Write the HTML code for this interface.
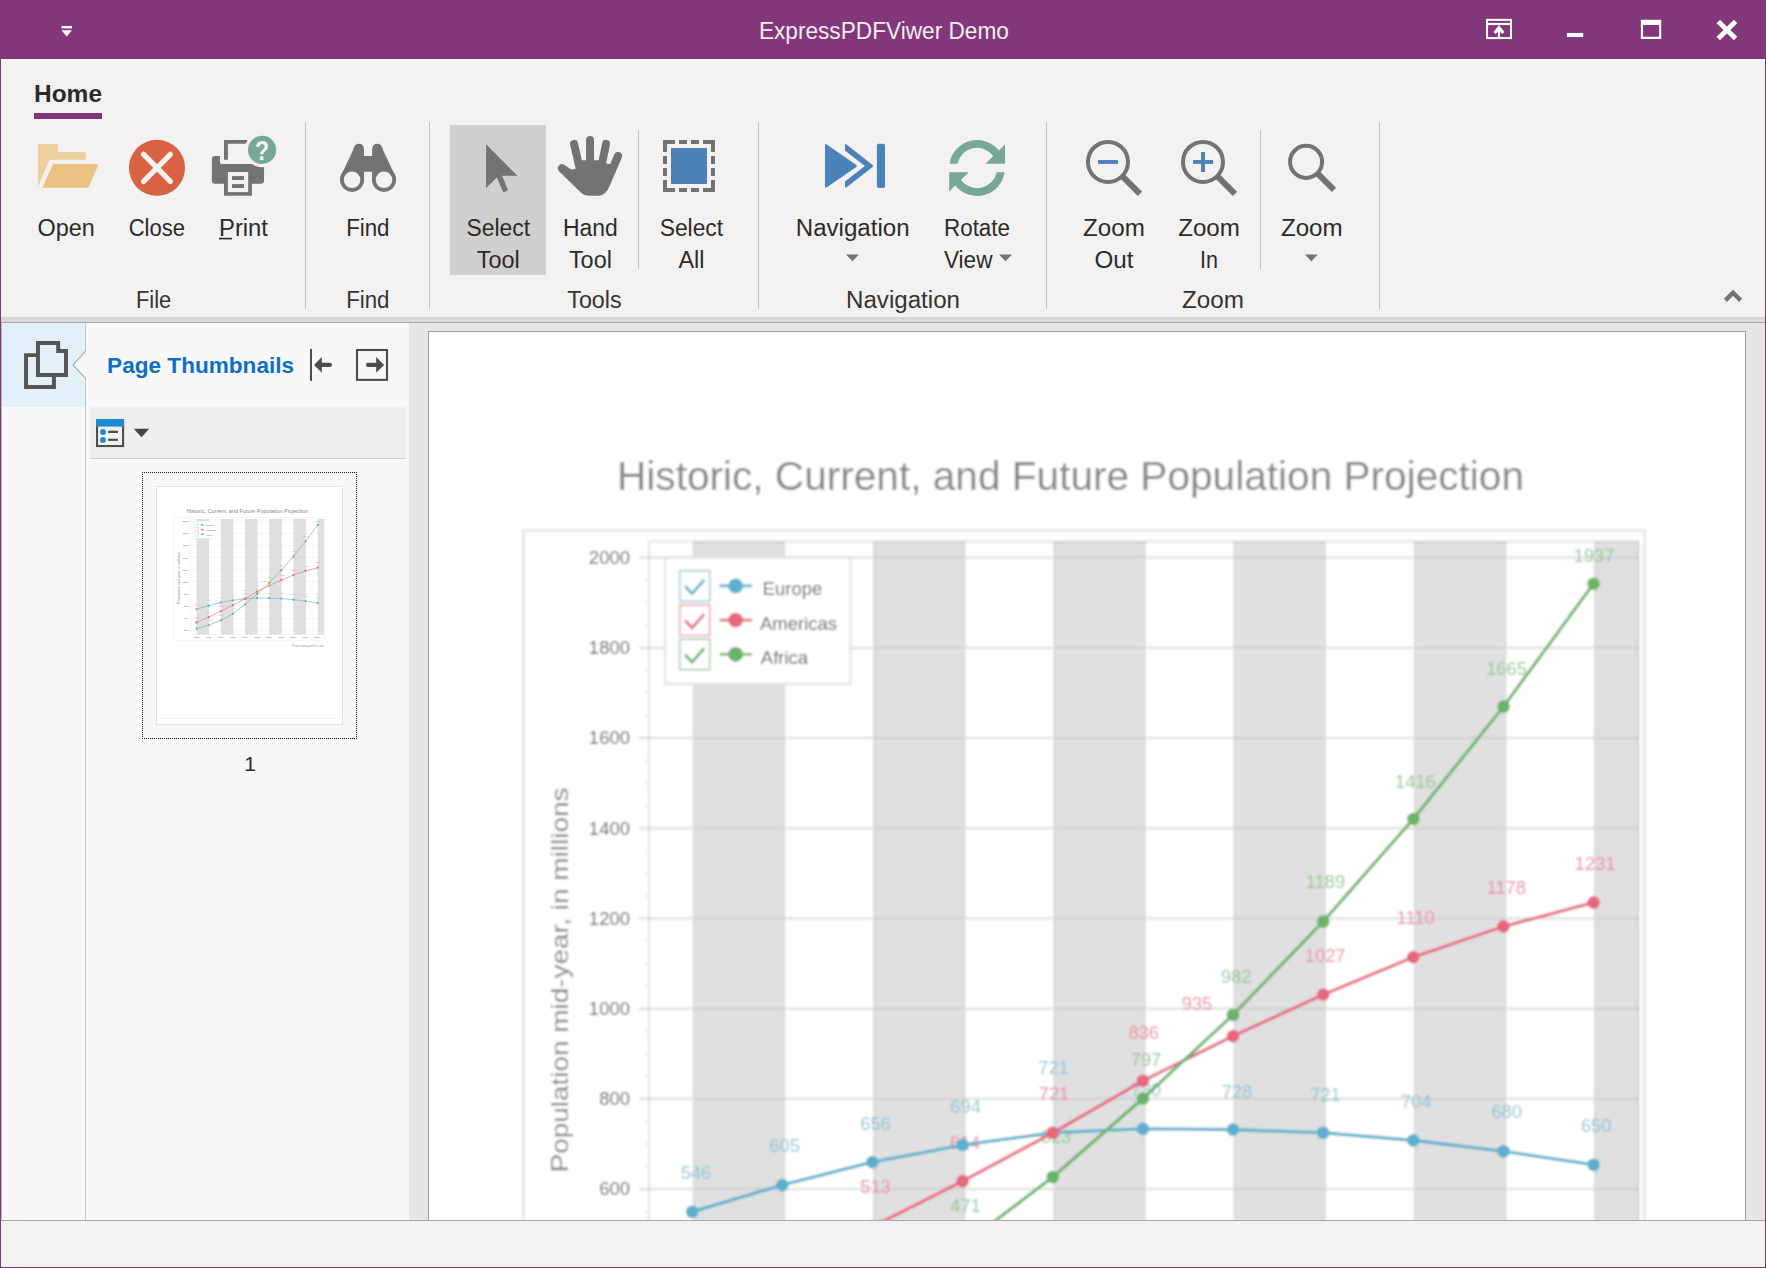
<!DOCTYPE html>
<html lang="en"><head><meta charset="utf-8"><title>ExpressPDFViwer Demo</title>
<style>
*{margin:0;padding:0;box-sizing:border-box}
html,body{width:1766px;height:1268px;overflow:hidden;background:#F3F2F1;font-family:"Liberation Sans", sans-serif}
#win{position:absolute;left:0;top:0;width:1766px;height:1268px;background:#F3F2F1;overflow:hidden}
#titlebar{position:absolute;left:0;top:0;width:1766px;height:59px;background:#82377A}
#bl,#br,#bb{position:absolute;background:#82377A}
#bl{left:0;top:59px;width:1px;height:1209px}
#br{left:1765px;top:59px;width:1px;height:1209px}
#bb{left:0;top:1267px;width:1766px;height:1px}
#ribbon{position:absolute;left:1px;top:59px;width:1764px;height:258px;background:#F3F2F1}
#ribshadow{position:absolute;left:1px;top:317px;width:1764px;height:5px;background:linear-gradient(#D3D3D3,#DEDEDE)}
#ribline{position:absolute;left:1px;top:322px;width:1764px;height:1px;background:#A9A9A9}
#selbtn{position:absolute;left:449px;top:66px;width:96px;height:150px;background:#D0CFCD}
#body{position:absolute;left:1px;top:323px;width:1764px;height:897px;background:#E6E6E6}
#tabs{position:absolute;left:1px;top:0;width:83px;height:897px;background:#F8F8F8}
#tabsel{position:absolute;left:0;top:0;width:83px;height:84px;background:#E5F1FA}
#tabsep{position:absolute;left:84px;top:0;width:1px;height:897px;background:#C6C6C6}
#lborder{position:absolute;left:0;top:0;width:1px;height:897px;background:#B8B8B8}
#pane{position:absolute;left:85px;top:0;width:323px;height:897px;background:#F8F8F8}
#panebar{position:absolute;left:4px;top:84px;width:316px;height:52px;background:#EFEFEF;border-bottom:1px solid #D2D2D2}
#thumbsel{position:absolute;left:56px;top:149px;width:215px;height:267px;border:1px dotted #111}
#thumbpage{position:absolute;left:70px;top:163px;width:187px;height:239px;background:#fff;border:1px solid #E2E2E2;overflow:hidden}
#viewer{position:absolute;left:427px;top:8px;width:1318px;height:889px;background:#fff;border:1px solid #A0A0A0;border-bottom:none;overflow:hidden}
#bodyline{position:absolute;left:1px;top:1220px;width:1764px;height:1px;background:#A9A9A9}
#status{position:absolute;left:1px;top:1221px;width:1764px;height:46px;background:#F3F2F1}
svg{position:absolute;left:0;top:0;overflow:visible}
svg text{font-family:"Liberation Sans", sans-serif}
</style></head><body><div id="win">
<div id="titlebar">
<svg width="1766" height="59" viewBox="0 0 1766 59">
<rect x="61.5" y="26" width="10.5" height="2.4" fill="#FFFFFF"/>
<path d="M61.5 30.2 H72 L66.75 36.4 Z" fill="#FFFFFF"/>
<rect x="1487.05" y="19.83" width="23.95" height="18.25" fill="none" stroke="#FFFFFF" stroke-width="2"/>
<rect x="1486.05" y="22.9" width="25.95" height="2.2" fill="#FFFFFF"/>
<rect x="1497.9" y="27.4" width="2.2" height="10" fill="#FFFFFF"/>
<path d="M1494.6 33 L1499 27.6 L1503.4 33" fill="none" stroke="#FFFFFF" stroke-width="3"/>
<rect x="1566.9" y="32.96" width="16.3" height="4.08" fill="#FFFFFF"/>
<path d="M1640.87 19.85 H1661.25 V39.08 H1640.87 Z M1643.04 25.08 V36.83 H1659.08 V25.08 Z" fill="#FFFFFF" fill-rule="evenodd"/>
<path d="M1718.3 21.55 L1735.6 38.5 M1735.6 21.55 L1718.3 38.5" stroke="#FFFFFF" stroke-width="4.8" fill="none"/>
<text x="883.9" y="39.4" font-size="23.3" text-anchor="middle" fill="#F4EEF3" font-weight="normal" textLength="250" lengthAdjust="spacingAndGlyphs">ExpressPDFViwer Demo</text>
</svg></div>
<div id="ribbon"><div id="selbtn"></div>
<svg width="1764" height="258" viewBox="1 59 1764 258">
<text x="34" y="102" font-size="24" font-weight="bold" fill="#2B2B2B" textLength="68" lengthAdjust="spacingAndGlyphs">Home</text>
<rect x="34" y="113" width="68" height="6" fill="#82377A"/>
<rect x="305.0" y="122" width="1" height="187" fill="#C4C2C0"/>
<rect x="429.0" y="122" width="1" height="187" fill="#C4C2C0"/>
<rect x="758.0" y="122" width="1" height="187" fill="#C4C2C0"/>
<rect x="1046.0" y="122" width="1" height="187" fill="#C4C2C0"/>
<rect x="1379.0" y="122" width="1" height="187" fill="#C4C2C0"/>
<rect x="638.0" y="130" width="1" height="139" fill="#C4C2C0"/>
<rect x="1260.0" y="130" width="1" height="139" fill="#C4C2C0"/>
<path d="M39.5 144.04 H56.4 Q57.9 144.04 57.9 145.5 V151.92 H84.5 Q85.98 151.92 85.98 153.4 V159.7 H52 Q49.7 159.7 48.8 161.6 L37.97 186.4 V145.5 Q37.97 144.04 39.5 144.04 Z" fill="#ECCF9E"/>
<path d="M53.1 163.97 H97 Q98.7 163.97 98 165.6 L88.9 186.5 Q88.3 187.8 86.8 187.8 H42.2 Z" fill="#EBC282"/>
<circle cx="156.99" cy="167.86" r="28.08" fill="#D96244"/>
<path d="M143.6 154.4 L170.4 181.4 M170.4 154.4 L143.6 181.4" stroke="#F3F2F1" stroke-width="5.3" stroke-linecap="round"/>
<path d="M225.95 159.8 V141.85 H247" fill="none" stroke="#737373" stroke-width="3.9"/>
<path d="M211.9 159.3 Q211.9 155.95 215.2 155.95 H219.9 V161.4 Q219.9 163.96 222.5 163.96 H264.05 V180.5 Q264.05 183.8 260.75 183.8 H215.2 Q211.9 183.8 211.9 180.5 Z" fill="#737373"/>
<rect x="224" y="171.1" width="27.9" height="24.6" fill="#737373"/>
<rect x="227.9" y="172" width="20.3" height="20.1" fill="#F3F2F1"/>
<rect x="232" y="176.1" width="12" height="3.9" fill="#737373"/>
<rect x="232" y="184.1" width="12" height="3.9" fill="#737373"/>
<circle cx="262.1" cy="149.9" r="17.4" fill="#F3F2F1"/>
<circle cx="262.1" cy="149.9" r="14.1" fill="#76A797"/>
<text transform="translate(262.05 160.1) scale(0.86 1.04)" x="0" y="0" font-size="27" font-weight="bold" text-anchor="middle" fill="#F4F4F2">?</text>
<path d="M340.6 176.4 L352.9 150.6 Q354.2 143.8 358.4 143.8 Q363.97 143.8 363.97 149.5 V156.05 H372.13 V149.5 Q372.13 143.8 377.7 143.8 Q381.9 143.8 383.2 150.6 L395.5 176.4 V181 H372.13 V171.68 H363.97 V181 H340.6 Z" fill="#737373"/>
<circle cx="352.08" cy="179.83" r="12.05" fill="#737373"/><circle cx="384.02" cy="179.83" r="12.05" fill="#737373"/>
<circle cx="352.08" cy="179.83" r="8.27" fill="#F3F2F1"/><circle cx="384.02" cy="179.83" r="8.27" fill="#F3F2F1"/>
<path d="M486.06 144.16 L517.43 175.64 L502.1 175.64 L507.7 189.2 Q508.1 190.3 507 190.8 L504.4 191.9 Q503.2 192.3 502.7 191.2 L496.9 177.5 L486.06 187.98 Z" fill="#737373"/>
<g stroke="#737373" stroke-linecap="round" fill="none" stroke-width="7.95"><path d="M574.02 143.8 L578.9 165"/><path d="M590.03 139.94 V165"/><path d="M606.05 143.8 L602 164"/><path d="M618.03 155.84 L611.6 171"/><path d="M561.87 168.1 L576 177.6"/></g>
<path d="M575.1 168.9 L581.4 160.3 H598.9 L606.05 163.6 L610.9 164.2 L621.7 157.3 L610.2 184.7 Q605.8 195.7 598.6 195.7 H589.2 Q583.6 195.7 579.8 191.5 L559 171.3 Z" fill="#737373"/>
<rect x="671" y="148" width="36" height="36" fill="#4D82B8"/>
<path d="M663 140 h12 v4 h-8 v8 h-4 Z M715 140 h-12 v4 h8 v8 h4 Z M715 192 h-12 v-4 h8 v-8 h4 Z M663 192 h12 v-4 h-8 v-8 h-4 Z" fill="#737373"/>
<rect x="679" y="140" width="8" height="4" fill="#737373"/>
<rect x="679" y="188" width="8" height="4" fill="#737373"/>
<rect x="663" y="156" width="4" height="8" fill="#737373"/>
<rect x="711" y="156" width="4" height="8" fill="#737373"/>
<rect x="691" y="140" width="8" height="4" fill="#737373"/>
<rect x="691" y="188" width="8" height="4" fill="#737373"/>
<rect x="663" y="168" width="4" height="8" fill="#737373"/>
<rect x="711" y="168" width="4" height="8" fill="#737373"/>
<path d="M845 145.3 Q845 143.3 846.6 144.5 L872.6 165 Q873.7 166 872.6 167 L846.6 187.3 Q845 188.5 845 186.5 V181.5 L864.8 166 L845 150.6 Z" fill="#4C82BB"/>
<path d="M824.97 145.4 Q824.97 143.2 826.8 144.5 L856.3 165.1 Q857.4 166 856.3 166.9 L826.8 187.3 Q824.97 188.6 824.97 186.4 Z" fill="#4C82BB"/>
<rect x="876.9" y="143.8" width="8.1" height="44.2" rx="1.8" fill="#4C82BB"/>
<path d="M949.53 163.75 A27.9 27.9 0 0 1 998.86 150.53 L1005 144.5 V163.75 H985.4 L993.26 156.04 A20.1 20.1 0 0 0 957.45 163.75 Z" fill="#76A797"/>
<path d="M949.53 163.75 A27.9 27.9 0 0 1 998.86 150.53 L1005 144.5 V163.75 H985.4 L993.26 156.04 A20.1 20.1 0 0 0 957.45 163.75 Z" fill="#76A797" transform="rotate(180 977.1 168)"/>
<circle cx="1107.97" cy="161.93" r="20.03" fill="none" stroke="#737373" stroke-width="4.0"/><path d="M1122.49 176.45 L1139.96 193.87" stroke="#737373" stroke-width="6.1" stroke-linecap="butt"/>
<rect x="1098.06" y="160.04" width="20" height="3.86" fill="#4C82BB"/>
<circle cx="1202.97" cy="161.93" r="20.03" fill="none" stroke="#737373" stroke-width="4.0"/><path d="M1217.49 176.45 L1234.96 193.87" stroke="#737373" stroke-width="6.1" stroke-linecap="butt"/>
<rect x="1193.06" y="160.04" width="20" height="3.86" fill="#4C82BB"/>
<rect x="1201.05" y="152" width="3.95" height="20" fill="#4C82BB"/>
<circle cx="1306.07" cy="161.85" r="16.03" fill="none" stroke="#737373" stroke-width="4"/><path d="M1317.76 173.54 L1333.96 189.88" stroke="#737373" stroke-width="6.1" stroke-linecap="butt"/>
<path d="M846 254.4 H859 L852.5 261.2 Z" fill="#737373"/>
<path d="M999 254.4 H1012 L1005.5 261.2 Z" fill="#737373"/>
<path d="M1304.8 254.4 H1317.8 L1311.3 261.2 Z" fill="#737373"/>
<path d="M1725.4 300.4 L1733 292.8 L1740.6 300.4" fill="none" stroke="#737373" stroke-width="4.4"/>
<text x="66.1" y="235.8" font-size="23.5" text-anchor="middle" fill="#2B2B2B" font-weight="normal" textLength="57.2" lengthAdjust="spacingAndGlyphs">Open</text>
<text x="156.9" y="235.8" font-size="23.5" text-anchor="middle" fill="#2B2B2B" font-weight="normal" textLength="56.4" lengthAdjust="spacingAndGlyphs">Close</text>
<text x="367.8" y="235.8" font-size="23.5" text-anchor="middle" fill="#2B2B2B" font-weight="normal" textLength="43.3" lengthAdjust="spacingAndGlyphs">Find</text>
<text x="498.3" y="235.8" font-size="23.5" text-anchor="middle" fill="#2B2B2B" font-weight="normal" textLength="63.4" lengthAdjust="spacingAndGlyphs">Select</text>
<text x="498.3" y="267.9" font-size="23.5" text-anchor="middle" fill="#2B2B2B" font-weight="normal" textLength="43" lengthAdjust="spacingAndGlyphs">Tool</text>
<text x="590.4" y="235.8" font-size="23.5" text-anchor="middle" fill="#2B2B2B" font-weight="normal" textLength="54.8" lengthAdjust="spacingAndGlyphs">Hand</text>
<text x="590.4" y="267.9" font-size="23.5" text-anchor="middle" fill="#2B2B2B" font-weight="normal" textLength="43" lengthAdjust="spacingAndGlyphs">Tool</text>
<text x="691.4" y="235.8" font-size="23.5" text-anchor="middle" fill="#2B2B2B" font-weight="normal" textLength="63.4" lengthAdjust="spacingAndGlyphs">Select</text>
<text x="691.4" y="267.9" font-size="23.5" text-anchor="middle" fill="#2B2B2B" font-weight="normal" textLength="26" lengthAdjust="spacingAndGlyphs">All</text>
<text x="852.7" y="235.8" font-size="23.5" text-anchor="middle" fill="#2B2B2B" font-weight="normal" textLength="113.8" lengthAdjust="spacingAndGlyphs">Navigation</text>
<text x="977" y="235.8" font-size="23.5" text-anchor="middle" fill="#2B2B2B" font-weight="normal" textLength="66" lengthAdjust="spacingAndGlyphs">Rotate</text>
<text x="1113.9" y="235.8" font-size="23.5" text-anchor="middle" fill="#2B2B2B" font-weight="normal" textLength="61.7" lengthAdjust="spacingAndGlyphs">Zoom</text>
<text x="1113.9" y="267.9" font-size="23.5" text-anchor="middle" fill="#2B2B2B" font-weight="normal" textLength="39" lengthAdjust="spacingAndGlyphs">Out</text>
<text x="1209" y="235.8" font-size="23.5" text-anchor="middle" fill="#2B2B2B" font-weight="normal" textLength="61.7" lengthAdjust="spacingAndGlyphs">Zoom</text>
<text x="1209" y="267.9" font-size="23.5" text-anchor="middle" fill="#2B2B2B" font-weight="normal" textLength="17.9" lengthAdjust="spacingAndGlyphs">In</text>
<text x="1311.8" y="235.8" font-size="23.5" text-anchor="middle" fill="#2B2B2B" font-weight="normal" textLength="61.7" lengthAdjust="spacingAndGlyphs">Zoom</text>
<text x="243.5" y="235.8" font-size="23.5" text-anchor="middle" fill="#2B2B2B" textLength="49" lengthAdjust="spacingAndGlyphs">Print</text>
<rect x="219" y="237.8" width="13" height="1.6" fill="#2B2B2B"/>
<text x="968.2" y="267.9" font-size="23.5" text-anchor="middle" fill="#2B2B2B" font-weight="normal" textLength="48.5" lengthAdjust="spacingAndGlyphs">View</text>
<text x="153.6" y="307.8" font-size="23.5" text-anchor="middle" fill="#333333" font-weight="normal" textLength="35.2" lengthAdjust="spacingAndGlyphs">File</text>
<text x="367.8" y="307.8" font-size="23.5" text-anchor="middle" fill="#333333" font-weight="normal" textLength="43.3" lengthAdjust="spacingAndGlyphs">Find</text>
<text x="594.4" y="307.8" font-size="23.5" text-anchor="middle" fill="#333333" font-weight="normal" textLength="54.3" lengthAdjust="spacingAndGlyphs">Tools</text>
<text x="903" y="307.8" font-size="23.5" text-anchor="middle" fill="#333333" font-weight="normal" textLength="114" lengthAdjust="spacingAndGlyphs">Navigation</text>
<text x="1212.9" y="307.8" font-size="23.5" text-anchor="middle" fill="#333333" font-weight="normal" textLength="62" lengthAdjust="spacingAndGlyphs">Zoom</text>
</svg></div>
<div id="ribshadow"></div><div id="ribline"></div>
<div id="body"><div id="tabs"><div id="tabsel"></div></div><div id="lborder"></div><div id="tabsep"></div>
<div id="pane"><div id="panebar"></div><div id="thumbsel"></div><div id="thumbpage">
<svg width="185" height="237" viewBox="157 487 185 237">
<g transform="translate(103.42 446.26) scale(0.1345)">
<text x="1070.5" y="495.5" font-size="39.8" text-anchor="middle" fill="#858585" textLength="907" lengthAdjust="spacingAndGlyphs">Historic, Current, and Future Population Projection</text>
<rect x="523.5" y="530.5" width="1121" height="913" fill="#fff" stroke="#E2E2E2" stroke-width="2.2"/>
<rect x="649" y="541.5" width="989.5" height="857.5" fill="#fff"/>
<rect x="694" y="541.5" width="90.4" height="857.5" fill="#E0E0E0"/>
<rect x="874" y="541.5" width="90.4" height="857.5" fill="#E0E0E0"/>
<rect x="1054" y="541.5" width="90.4" height="857.5" fill="#E0E0E0"/>
<rect x="1234" y="541.5" width="90.4" height="857.5" fill="#E0E0E0"/>
<rect x="1414" y="541.5" width="90.4" height="857.5" fill="#E0E0E0"/>
<rect x="1594" y="541.5" width="44.5" height="857.5" fill="#E0E0E0"/>
<rect x="639" y="556.4" width="999.5" height="2.4" fill="#E1E1E1"/>
<rect x="694" y="556.4" width="90.4" height="2.4" fill="#D3D3D3"/>
<rect x="874" y="556.4" width="90.4" height="2.4" fill="#D3D3D3"/>
<rect x="1054" y="556.4" width="90.4" height="2.4" fill="#D3D3D3"/>
<rect x="1234" y="556.4" width="90.4" height="2.4" fill="#D3D3D3"/>
<rect x="1414" y="556.4" width="90.4" height="2.4" fill="#D3D3D3"/>
<rect x="1594" y="556.4" width="44.5" height="2.4" fill="#D3D3D3"/>
<rect x="639" y="646.6" width="999.5" height="2.4" fill="#E1E1E1"/>
<rect x="694" y="646.6" width="90.4" height="2.4" fill="#D3D3D3"/>
<rect x="874" y="646.6" width="90.4" height="2.4" fill="#D3D3D3"/>
<rect x="1054" y="646.6" width="90.4" height="2.4" fill="#D3D3D3"/>
<rect x="1234" y="646.6" width="90.4" height="2.4" fill="#D3D3D3"/>
<rect x="1414" y="646.6" width="90.4" height="2.4" fill="#D3D3D3"/>
<rect x="1594" y="646.6" width="44.5" height="2.4" fill="#D3D3D3"/>
<rect x="639" y="736.8" width="999.5" height="2.4" fill="#E1E1E1"/>
<rect x="694" y="736.8" width="90.4" height="2.4" fill="#D3D3D3"/>
<rect x="874" y="736.8" width="90.4" height="2.4" fill="#D3D3D3"/>
<rect x="1054" y="736.8" width="90.4" height="2.4" fill="#D3D3D3"/>
<rect x="1234" y="736.8" width="90.4" height="2.4" fill="#D3D3D3"/>
<rect x="1414" y="736.8" width="90.4" height="2.4" fill="#D3D3D3"/>
<rect x="1594" y="736.8" width="44.5" height="2.4" fill="#D3D3D3"/>
<rect x="639" y="827.0" width="999.5" height="2.4" fill="#E1E1E1"/>
<rect x="694" y="827.0" width="90.4" height="2.4" fill="#D3D3D3"/>
<rect x="874" y="827.0" width="90.4" height="2.4" fill="#D3D3D3"/>
<rect x="1054" y="827.0" width="90.4" height="2.4" fill="#D3D3D3"/>
<rect x="1234" y="827.0" width="90.4" height="2.4" fill="#D3D3D3"/>
<rect x="1414" y="827.0" width="90.4" height="2.4" fill="#D3D3D3"/>
<rect x="1594" y="827.0" width="44.5" height="2.4" fill="#D3D3D3"/>
<rect x="639" y="917.2" width="999.5" height="2.4" fill="#E1E1E1"/>
<rect x="694" y="917.2" width="90.4" height="2.4" fill="#D3D3D3"/>
<rect x="874" y="917.2" width="90.4" height="2.4" fill="#D3D3D3"/>
<rect x="1054" y="917.2" width="90.4" height="2.4" fill="#D3D3D3"/>
<rect x="1234" y="917.2" width="90.4" height="2.4" fill="#D3D3D3"/>
<rect x="1414" y="917.2" width="90.4" height="2.4" fill="#D3D3D3"/>
<rect x="1594" y="917.2" width="44.5" height="2.4" fill="#D3D3D3"/>
<rect x="639" y="1007.4" width="999.5" height="2.4" fill="#E1E1E1"/>
<rect x="694" y="1007.4" width="90.4" height="2.4" fill="#D3D3D3"/>
<rect x="874" y="1007.4" width="90.4" height="2.4" fill="#D3D3D3"/>
<rect x="1054" y="1007.4" width="90.4" height="2.4" fill="#D3D3D3"/>
<rect x="1234" y="1007.4" width="90.4" height="2.4" fill="#D3D3D3"/>
<rect x="1414" y="1007.4" width="90.4" height="2.4" fill="#D3D3D3"/>
<rect x="1594" y="1007.4" width="44.5" height="2.4" fill="#D3D3D3"/>
<rect x="639" y="1097.6" width="999.5" height="2.4" fill="#E1E1E1"/>
<rect x="694" y="1097.6" width="90.4" height="2.4" fill="#D3D3D3"/>
<rect x="874" y="1097.6" width="90.4" height="2.4" fill="#D3D3D3"/>
<rect x="1054" y="1097.6" width="90.4" height="2.4" fill="#D3D3D3"/>
<rect x="1234" y="1097.6" width="90.4" height="2.4" fill="#D3D3D3"/>
<rect x="1414" y="1097.6" width="90.4" height="2.4" fill="#D3D3D3"/>
<rect x="1594" y="1097.6" width="44.5" height="2.4" fill="#D3D3D3"/>
<rect x="639" y="1187.8" width="999.5" height="2.4" fill="#E1E1E1"/>
<rect x="694" y="1187.8" width="90.4" height="2.4" fill="#D3D3D3"/>
<rect x="874" y="1187.8" width="90.4" height="2.4" fill="#D3D3D3"/>
<rect x="1054" y="1187.8" width="90.4" height="2.4" fill="#D3D3D3"/>
<rect x="1234" y="1187.8" width="90.4" height="2.4" fill="#D3D3D3"/>
<rect x="1414" y="1187.8" width="90.4" height="2.4" fill="#D3D3D3"/>
<rect x="1594" y="1187.8" width="44.5" height="2.4" fill="#D3D3D3"/>
<rect x="639" y="1278.0" width="999.5" height="2.4" fill="#E1E1E1"/>
<rect x="694" y="1278.0" width="90.4" height="2.4" fill="#D3D3D3"/>
<rect x="874" y="1278.0" width="90.4" height="2.4" fill="#D3D3D3"/>
<rect x="1054" y="1278.0" width="90.4" height="2.4" fill="#D3D3D3"/>
<rect x="1234" y="1278.0" width="90.4" height="2.4" fill="#D3D3D3"/>
<rect x="1414" y="1278.0" width="90.4" height="2.4" fill="#D3D3D3"/>
<rect x="1594" y="1278.0" width="44.5" height="2.4" fill="#D3D3D3"/>
<rect x="639" y="1368.2" width="999.5" height="2.4" fill="#E1E1E1"/>
<rect x="694" y="1368.2" width="90.4" height="2.4" fill="#D3D3D3"/>
<rect x="874" y="1368.2" width="90.4" height="2.4" fill="#D3D3D3"/>
<rect x="1054" y="1368.2" width="90.4" height="2.4" fill="#D3D3D3"/>
<rect x="1234" y="1368.2" width="90.4" height="2.4" fill="#D3D3D3"/>
<rect x="1414" y="1368.2" width="90.4" height="2.4" fill="#D3D3D3"/>
<rect x="1594" y="1368.2" width="44.5" height="2.4" fill="#D3D3D3"/>
<rect x="692.8" y="541.5" width="2.2" height="857.5" fill="#DADADA"/>
<rect x="782.9" y="541.5" width="2.2" height="857.5" fill="#DADADA"/>
<rect x="873.1" y="541.5" width="2.2" height="857.5" fill="#DADADA"/>
<rect x="963.2" y="541.5" width="2.2" height="857.5" fill="#DADADA"/>
<rect x="1053.4" y="541.5" width="2.2" height="857.5" fill="#DADADA"/>
<rect x="1143.5" y="541.5" width="2.2" height="857.5" fill="#DADADA"/>
<rect x="1233.6" y="541.5" width="2.2" height="857.5" fill="#DADADA"/>
<rect x="1323.8" y="541.5" width="2.2" height="857.5" fill="#DADADA"/>
<rect x="1413.9" y="541.5" width="2.2" height="857.5" fill="#DADADA"/>
<rect x="1504.1" y="541.5" width="2.2" height="857.5" fill="#DADADA"/>
<rect x="1594.2" y="541.5" width="2.2" height="857.5" fill="#DADADA"/>
<rect x="644.5" y="579.4" width="4" height="1.6" fill="#ECECEC"/>
<rect x="644.5" y="601.9" width="4" height="1.6" fill="#ECECEC"/>
<rect x="644.5" y="624.5" width="4" height="1.6" fill="#ECECEC"/>
<rect x="644.5" y="669.6" width="4" height="1.6" fill="#ECECEC"/>
<rect x="644.5" y="692.1" width="4" height="1.6" fill="#ECECEC"/>
<rect x="644.5" y="714.7" width="4" height="1.6" fill="#ECECEC"/>
<rect x="644.5" y="759.8" width="4" height="1.6" fill="#ECECEC"/>
<rect x="644.5" y="782.3" width="4" height="1.6" fill="#ECECEC"/>
<rect x="644.5" y="804.9" width="4" height="1.6" fill="#ECECEC"/>
<rect x="644.5" y="850.0" width="4" height="1.6" fill="#ECECEC"/>
<rect x="644.5" y="872.5" width="4" height="1.6" fill="#ECECEC"/>
<rect x="644.5" y="895.1" width="4" height="1.6" fill="#ECECEC"/>
<rect x="644.5" y="940.2" width="4" height="1.6" fill="#ECECEC"/>
<rect x="644.5" y="962.7" width="4" height="1.6" fill="#ECECEC"/>
<rect x="644.5" y="985.2" width="4" height="1.6" fill="#ECECEC"/>
<rect x="644.5" y="1030.4" width="4" height="1.6" fill="#ECECEC"/>
<rect x="644.5" y="1052.9" width="4" height="1.6" fill="#ECECEC"/>
<rect x="644.5" y="1075.5" width="4" height="1.6" fill="#ECECEC"/>
<rect x="644.5" y="1120.5" width="4" height="1.6" fill="#ECECEC"/>
<rect x="644.5" y="1143.1" width="4" height="1.6" fill="#ECECEC"/>
<rect x="644.5" y="1165.7" width="4" height="1.6" fill="#ECECEC"/>
<rect x="644.5" y="1210.8" width="4" height="1.6" fill="#ECECEC"/>
<rect x="644.5" y="1233.3" width="4" height="1.6" fill="#ECECEC"/>
<rect x="644.5" y="1255.9" width="4" height="1.6" fill="#ECECEC"/>
<rect x="644.5" y="1301.0" width="4" height="1.6" fill="#ECECEC"/>
<rect x="644.5" y="1323.5" width="4" height="1.6" fill="#ECECEC"/>
<rect x="644.5" y="1346.0" width="4" height="1.6" fill="#ECECEC"/>
<rect x="644.5" y="1391.2" width="4" height="1.6" fill="#ECECEC"/>
<rect x="649" y="541.5" width="989.5" height="857.5" fill="none" stroke="#000" stroke-opacity="0.1" stroke-width="2.2"/>
<text x="630" y="564.0" font-size="18.5" text-anchor="end" fill="#5F5F66">2000</text>
<text x="630" y="654.2" font-size="18.5" text-anchor="end" fill="#5F5F66">1800</text>
<text x="630" y="744.4" font-size="18.5" text-anchor="end" fill="#5F5F66">1600</text>
<text x="630" y="834.6" font-size="18.5" text-anchor="end" fill="#5F5F66">1400</text>
<text x="630" y="924.8" font-size="18.5" text-anchor="end" fill="#5F5F66">1200</text>
<text x="630" y="1015.0" font-size="18.5" text-anchor="end" fill="#5F5F66">1000</text>
<text x="630" y="1105.2" font-size="18.5" text-anchor="end" fill="#5F5F66">800</text>
<text x="630" y="1195.4" font-size="18.5" text-anchor="end" fill="#5F5F66">600</text>
<text x="630" y="1285.6" font-size="18.5" text-anchor="end" fill="#5F5F66">400</text>
<text x="630" y="1375.8" font-size="18.5" text-anchor="end" fill="#5F5F66">200</text>
<text x="692.2" y="1428" font-size="18.5" text-anchor="middle" fill="#5F5F66">1950</text>
<text x="782.3" y="1428" font-size="18.5" text-anchor="middle" fill="#5F5F66">1960</text>
<text x="872.5" y="1428" font-size="18.5" text-anchor="middle" fill="#5F5F66">1970</text>
<text x="962.6" y="1428" font-size="18.5" text-anchor="middle" fill="#5F5F66">1980</text>
<text x="1052.8" y="1428" font-size="18.5" text-anchor="middle" fill="#5F5F66">1990</text>
<text x="1142.9" y="1428" font-size="18.5" text-anchor="middle" fill="#5F5F66">2000</text>
<text x="1233.0" y="1428" font-size="18.5" text-anchor="middle" fill="#5F5F66">2010</text>
<text x="1323.2" y="1428" font-size="18.5" text-anchor="middle" fill="#5F5F66">2020</text>
<text x="1413.3" y="1428" font-size="18.5" text-anchor="middle" fill="#5F5F66">2030</text>
<text x="1503.5" y="1428" font-size="18.5" text-anchor="middle" fill="#5F5F66">2040</text>
<text x="1593.6" y="1428" font-size="18.5" text-anchor="middle" fill="#5F5F66">2050</text>
<text transform="translate(568.2 980) rotate(-90)" font-size="24" text-anchor="middle" fill="#858585" textLength="385" lengthAdjust="spacingAndGlyphs">Population mid-year, in millions</text>
<text x="1638" y="1491" font-size="22" text-anchor="end" fill="#A0A0A0">From www.geohive.com</text>
<text x="696.0" y="1179.2" font-size="18.3" text-anchor="middle" fill="#8CC3D5">546</text>
<text x="784.6" y="1151.6" font-size="18.3" text-anchor="middle" fill="#8CC3D5">605</text>
<text x="875.5" y="1129.5" font-size="18.3" text-anchor="middle" fill="#8CC3D5">656</text>
<text x="965.6" y="1112.5" font-size="18.3" text-anchor="middle" fill="#8CC3D5">694</text>
<text x="1053.5" y="1073.5" font-size="18.3" text-anchor="middle" fill="#8CC3D5">721</text>
<text x="1146.0" y="1095.8" font-size="18.3" text-anchor="middle" fill="#8CC3D5">730</text>
<text x="1237.0" y="1097.7" font-size="18.3" text-anchor="middle" fill="#8CC3D5">728</text>
<text x="1325.5" y="1100.8" font-size="18.3" text-anchor="middle" fill="#8CC3D5">721</text>
<text x="1416.2" y="1107.5" font-size="18.3" text-anchor="middle" fill="#8CC3D5">704</text>
<text x="1506.7" y="1117.7" font-size="18.3" text-anchor="middle" fill="#8CC3D5">680</text>
<text x="1596.2" y="1132.0" font-size="18.3" text-anchor="middle" fill="#8CC3D5">650</text>
<text x="695.2" y="1275.9" font-size="18.3" text-anchor="middle" fill="#EB8D9C">332</text>
<text x="785.3" y="1237.5" font-size="18.3" text-anchor="middle" fill="#EB8D9C">417</text>
<text x="875.5" y="1193.3" font-size="18.3" text-anchor="middle" fill="#EB8D9C">513</text>
<text x="965.0" y="1148.5" font-size="18.3" text-anchor="middle" fill="#EB8D9C">614</text>
<text x="1054.0" y="1100.3" font-size="18.3" text-anchor="middle" fill="#EB8D9C">721</text>
<text x="1143.8" y="1039.3" font-size="18.3" text-anchor="middle" fill="#EB8D9C">836</text>
<text x="1197.0" y="1010.0" font-size="18.3" text-anchor="middle" fill="#EB8D9C">935</text>
<text x="1325.2" y="962.0" font-size="18.3" text-anchor="middle" fill="#EB8D9C">1027</text>
<text x="1415.6" y="924.0" font-size="18.3" text-anchor="middle" fill="#EB8D9C">1110</text>
<text x="1506.3" y="894.2" font-size="18.3" text-anchor="middle" fill="#EB8D9C">1178</text>
<text x="1595.2" y="870.4" font-size="18.3" text-anchor="middle" fill="#EB8D9C">1231</text>
<text x="695.2" y="1323.3" font-size="18.3" text-anchor="middle" fill="#90C890">227</text>
<text x="785.3" y="1298.0" font-size="18.3" text-anchor="middle" fill="#90C890">283</text>
<text x="875.5" y="1262.8" font-size="18.3" text-anchor="middle" fill="#90C890">361</text>
<text x="965.6" y="1211.5" font-size="18.3" text-anchor="middle" fill="#90C890">471</text>
<text x="1056.0" y="1143.3" font-size="18.3" text-anchor="middle" fill="#90C890">623</text>
<text x="1146.0" y="1066.0" font-size="18.3" text-anchor="middle" fill="#90C890">797</text>
<text x="1236.2" y="983.0" font-size="18.3" text-anchor="middle" fill="#90C890">982</text>
<text x="1325.5" y="888.3" font-size="18.3" text-anchor="middle" fill="#90C890">1189</text>
<text x="1415.4" y="787.7" font-size="18.3" text-anchor="middle" fill="#90C890">1416</text>
<text x="1506.5" y="674.8" font-size="18.3" text-anchor="middle" fill="#90C890">1665</text>
<text x="1594.1" y="561.6" font-size="18.3" text-anchor="middle" fill="#90C890">1937</text>
<polyline points="692.2,1211.8 782.3,1185.1 872.5,1162.1 962.6,1145.0 1052.8,1132.8 1142.9,1128.7 1233.0,1129.6 1323.2,1132.8 1413.3,1140.4 1503.5,1151.3 1593.6,1164.8" fill="none" stroke="#5BB0CD" stroke-width="4.5" stroke-linejoin="round"/>
<circle cx="692.2" cy="1211.8" r="8" fill="#5BB0CD"/>
<circle cx="782.3" cy="1185.1" r="8" fill="#5BB0CD"/>
<circle cx="872.5" cy="1162.1" r="8" fill="#5BB0CD"/>
<circle cx="962.6" cy="1145.0" r="8" fill="#5BB0CD"/>
<circle cx="1052.8" cy="1132.8" r="8" fill="#5BB0CD"/>
<circle cx="1142.9" cy="1128.7" r="8" fill="#5BB0CD"/>
<circle cx="1233.0" cy="1129.6" r="8" fill="#5BB0CD"/>
<circle cx="1323.2" cy="1132.8" r="8" fill="#5BB0CD"/>
<circle cx="1413.3" cy="1140.4" r="8" fill="#5BB0CD"/>
<circle cx="1503.5" cy="1151.3" r="8" fill="#5BB0CD"/>
<circle cx="1593.6" cy="1164.8" r="8" fill="#5BB0CD"/>
<polyline points="692.2,1308.4 782.3,1270.0 872.5,1226.7 962.6,1181.1 1052.8,1132.8 1142.9,1080.8 1233.0,1036.1 1323.2,994.6 1413.3,957.1 1503.5,926.4 1593.6,902.5" fill="none" stroke="#E8687D" stroke-width="4.5" stroke-linejoin="round"/>
<circle cx="692.2" cy="1308.4" r="8" fill="#E8687D"/>
<circle cx="782.3" cy="1270.0" r="8" fill="#E8687D"/>
<circle cx="872.5" cy="1226.7" r="8" fill="#E8687D"/>
<circle cx="962.6" cy="1181.1" r="8" fill="#E8687D"/>
<circle cx="1052.8" cy="1132.8" r="8" fill="#E8687D"/>
<circle cx="1142.9" cy="1080.8" r="8" fill="#E8687D"/>
<circle cx="1233.0" cy="1036.1" r="8" fill="#E8687D"/>
<circle cx="1323.2" cy="994.6" r="8" fill="#E8687D"/>
<circle cx="1413.3" cy="957.1" r="8" fill="#E8687D"/>
<circle cx="1503.5" cy="926.4" r="8" fill="#E8687D"/>
<circle cx="1593.6" cy="902.5" r="8" fill="#E8687D"/>
<polyline points="692.2,1355.8 782.3,1330.5 872.5,1295.3 962.6,1245.6 1052.8,1177.0 1142.9,1098.5 1233.0,1014.9 1323.2,921.5 1413.3,819.0 1503.5,706.6 1593.6,583.7" fill="none" stroke="#6AB46A" stroke-width="4.5" stroke-linejoin="round"/>
<circle cx="692.2" cy="1355.8" r="8" fill="#6AB46A"/>
<circle cx="782.3" cy="1330.5" r="8" fill="#6AB46A"/>
<circle cx="872.5" cy="1295.3" r="8" fill="#6AB46A"/>
<circle cx="962.6" cy="1245.6" r="8" fill="#6AB46A"/>
<circle cx="1052.8" cy="1177.0" r="8" fill="#6AB46A"/>
<circle cx="1142.9" cy="1098.5" r="8" fill="#6AB46A"/>
<circle cx="1233.0" cy="1014.9" r="8" fill="#6AB46A"/>
<circle cx="1323.2" cy="921.5" r="8" fill="#6AB46A"/>
<circle cx="1413.3" cy="819.0" r="8" fill="#6AB46A"/>
<circle cx="1503.5" cy="706.6" r="8" fill="#6AB46A"/>
<circle cx="1593.6" cy="583.7" r="8" fill="#6AB46A"/>
<rect x="665.3" y="557.6" width="185.2" height="126.3" fill="#fff" stroke="#E0E0E0" stroke-width="2"/>
<rect x="679.8" y="570.7" width="30" height="30.6" fill="#fff" stroke="#5BB0CD" stroke-opacity="0.5" stroke-width="2"/>
<path d="M685.2 586.3 L692 593.7 L704.2 579.9" fill="none" stroke="#5BB0CD" stroke-width="2.8"/>
<path d="M719.6 585.9 H752" stroke="#5BB0CD" stroke-width="2.6"/>
<circle cx="735.6" cy="585.9" r="7.4" fill="#5BB0CD"/>
<text x="762.7" y="595.3" font-size="18.5" fill="#5F5F66">Europe</text>
<rect x="679.8" y="604.9" width="30" height="30.6" fill="#fff" stroke="#E8687D" stroke-opacity="0.5" stroke-width="2"/>
<path d="M685.2 620.5 L692 627.9 L704.2 614.1" fill="none" stroke="#E8687D" stroke-width="2.8"/>
<path d="M719.6 620.1 H752" stroke="#E8687D" stroke-width="2.6"/>
<circle cx="735.6" cy="620.1" r="7.4" fill="#E8687D"/>
<text x="760" y="629.5" font-size="18.5" fill="#5F5F66">Americas</text>
<rect x="679.8" y="639.1" width="30" height="30.6" fill="#fff" stroke="#6AB46A" stroke-opacity="0.5" stroke-width="2"/>
<path d="M685.2 654.7 L692 662.1 L704.2 648.3" fill="none" stroke="#6AB46A" stroke-width="2.8"/>
<path d="M719.6 654.3 H752" stroke="#6AB46A" stroke-width="2.6"/>
<circle cx="735.6" cy="654.3" r="7.4" fill="#6AB46A"/>
<text x="760.8" y="663.7" font-size="18.5" fill="#5F5F66">Africa</text>
</g>
<rect x="162" y="718.2" width="175" height="0.8" fill="#EEEEEE"/>
</svg>
</div></div>
<svg width="408" height="897" viewBox="1 323 408 897">
<path d="M37 355.13 H26.04 V386.96 H53.93 V376" fill="none" stroke="#555555" stroke-width="3.94"/>
<path d="M37.96 343.01 H58.17 V350.94 H66 V375.04 H37.96 Z" fill="none" stroke="#555555" stroke-width="3.94"/>
<path d="M86.2 351 L72.9 364.98 L86.2 378.5 Z" fill="#F8F8F8"/>
<path d="M85.6 351.1 L72.9 364.98 L85.6 378.4" fill="none" stroke="#ADADAD" stroke-width="1.2"/>
<rect x="309.97" y="348.95" width="2.03" height="31.95" fill="#4D4D4D"/>
<path d="M314.04 364.93 L321.8 357.1 V362.8 H329.9 A2.13 2.13 0 0 1 329.9 367.07 H321.8 V372.84 Z" fill="#4D4D4D"/>
<rect x="357" y="350" width="30" height="29.85" fill="none" stroke="#4D4D4D" stroke-width="2.1"/>
<path d="M384.1 364.93 L376.16 357.1 V362.8 H368.1 A2.13 2.13 0 0 0 368.1 367.07 H376.16 V372.84 Z" fill="#4D4D4D"/>
<rect x="97.03" y="424" width="26.04" height="22.05" fill="#F1F1F1" stroke="#4D4D4D" stroke-width="2.06"/>
<rect x="96" y="419" width="28.1" height="7.58" fill="#1F8AD0"/>
<circle cx="103" cy="432" r="2.96" fill="#1F8AD0"/><circle cx="103" cy="439.88" r="2.96" fill="#1F8AD0"/>
<rect x="108.13" y="430.7" width="9.86" height="2.3" fill="#4D4D4D"/><rect x="108.13" y="438.7" width="9.86" height="2.2" fill="#4D4D4D"/>
<path d="M133.75 428.85 H149.2 L141.5 437.13 Z" fill="#454545"/>
<text x="107.1" y="372.6" font-size="21.7" font-weight="bold" fill="#0F6FC6" textLength="187" lengthAdjust="spacingAndGlyphs">Page Thumbnails</text>
<text x="250" y="770.5" font-size="21" text-anchor="middle" fill="#2B2B2B" font-weight="normal">1</text>
</svg>
<div id="viewer">
<svg width="1316" height="888" viewBox="429 332 1316 888">
<filter id="soft" x="0" y="0" width="100%" height="100%" filterUnits="objectBoundingBox"><feGaussianBlur stdDeviation="0.8"/></filter>
<g filter="url(#soft)">
<rect x="429" y="332" width="1316" height="888" fill="#fff"/>
<text x="1070.5" y="490.4" font-size="39.8" text-anchor="middle" fill="#858585" textLength="907" lengthAdjust="spacingAndGlyphs">Historic, Current, and Future Population Projection</text>
<rect x="523.5" y="530.5" width="1121" height="913" fill="#fff" stroke="#E2E2E2" stroke-width="2.2"/>
<rect x="649" y="541.5" width="989.5" height="857.5" fill="#fff"/>
<rect x="694" y="541.5" width="90.4" height="857.5" fill="#E0E0E0"/>
<rect x="874" y="541.5" width="90.4" height="857.5" fill="#E0E0E0"/>
<rect x="1054" y="541.5" width="90.4" height="857.5" fill="#E0E0E0"/>
<rect x="1234" y="541.5" width="90.4" height="857.5" fill="#E0E0E0"/>
<rect x="1414" y="541.5" width="90.4" height="857.5" fill="#E0E0E0"/>
<rect x="1594" y="541.5" width="44.5" height="857.5" fill="#E0E0E0"/>
<rect x="639" y="556.4" width="999.5" height="2.4" fill="#E1E1E1"/>
<rect x="694" y="556.4" width="90.4" height="2.4" fill="#D3D3D3"/>
<rect x="874" y="556.4" width="90.4" height="2.4" fill="#D3D3D3"/>
<rect x="1054" y="556.4" width="90.4" height="2.4" fill="#D3D3D3"/>
<rect x="1234" y="556.4" width="90.4" height="2.4" fill="#D3D3D3"/>
<rect x="1414" y="556.4" width="90.4" height="2.4" fill="#D3D3D3"/>
<rect x="1594" y="556.4" width="44.5" height="2.4" fill="#D3D3D3"/>
<rect x="639" y="646.6" width="999.5" height="2.4" fill="#E1E1E1"/>
<rect x="694" y="646.6" width="90.4" height="2.4" fill="#D3D3D3"/>
<rect x="874" y="646.6" width="90.4" height="2.4" fill="#D3D3D3"/>
<rect x="1054" y="646.6" width="90.4" height="2.4" fill="#D3D3D3"/>
<rect x="1234" y="646.6" width="90.4" height="2.4" fill="#D3D3D3"/>
<rect x="1414" y="646.6" width="90.4" height="2.4" fill="#D3D3D3"/>
<rect x="1594" y="646.6" width="44.5" height="2.4" fill="#D3D3D3"/>
<rect x="639" y="736.8" width="999.5" height="2.4" fill="#E1E1E1"/>
<rect x="694" y="736.8" width="90.4" height="2.4" fill="#D3D3D3"/>
<rect x="874" y="736.8" width="90.4" height="2.4" fill="#D3D3D3"/>
<rect x="1054" y="736.8" width="90.4" height="2.4" fill="#D3D3D3"/>
<rect x="1234" y="736.8" width="90.4" height="2.4" fill="#D3D3D3"/>
<rect x="1414" y="736.8" width="90.4" height="2.4" fill="#D3D3D3"/>
<rect x="1594" y="736.8" width="44.5" height="2.4" fill="#D3D3D3"/>
<rect x="639" y="827.0" width="999.5" height="2.4" fill="#E1E1E1"/>
<rect x="694" y="827.0" width="90.4" height="2.4" fill="#D3D3D3"/>
<rect x="874" y="827.0" width="90.4" height="2.4" fill="#D3D3D3"/>
<rect x="1054" y="827.0" width="90.4" height="2.4" fill="#D3D3D3"/>
<rect x="1234" y="827.0" width="90.4" height="2.4" fill="#D3D3D3"/>
<rect x="1414" y="827.0" width="90.4" height="2.4" fill="#D3D3D3"/>
<rect x="1594" y="827.0" width="44.5" height="2.4" fill="#D3D3D3"/>
<rect x="639" y="917.2" width="999.5" height="2.4" fill="#E1E1E1"/>
<rect x="694" y="917.2" width="90.4" height="2.4" fill="#D3D3D3"/>
<rect x="874" y="917.2" width="90.4" height="2.4" fill="#D3D3D3"/>
<rect x="1054" y="917.2" width="90.4" height="2.4" fill="#D3D3D3"/>
<rect x="1234" y="917.2" width="90.4" height="2.4" fill="#D3D3D3"/>
<rect x="1414" y="917.2" width="90.4" height="2.4" fill="#D3D3D3"/>
<rect x="1594" y="917.2" width="44.5" height="2.4" fill="#D3D3D3"/>
<rect x="639" y="1007.4" width="999.5" height="2.4" fill="#E1E1E1"/>
<rect x="694" y="1007.4" width="90.4" height="2.4" fill="#D3D3D3"/>
<rect x="874" y="1007.4" width="90.4" height="2.4" fill="#D3D3D3"/>
<rect x="1054" y="1007.4" width="90.4" height="2.4" fill="#D3D3D3"/>
<rect x="1234" y="1007.4" width="90.4" height="2.4" fill="#D3D3D3"/>
<rect x="1414" y="1007.4" width="90.4" height="2.4" fill="#D3D3D3"/>
<rect x="1594" y="1007.4" width="44.5" height="2.4" fill="#D3D3D3"/>
<rect x="639" y="1097.6" width="999.5" height="2.4" fill="#E1E1E1"/>
<rect x="694" y="1097.6" width="90.4" height="2.4" fill="#D3D3D3"/>
<rect x="874" y="1097.6" width="90.4" height="2.4" fill="#D3D3D3"/>
<rect x="1054" y="1097.6" width="90.4" height="2.4" fill="#D3D3D3"/>
<rect x="1234" y="1097.6" width="90.4" height="2.4" fill="#D3D3D3"/>
<rect x="1414" y="1097.6" width="90.4" height="2.4" fill="#D3D3D3"/>
<rect x="1594" y="1097.6" width="44.5" height="2.4" fill="#D3D3D3"/>
<rect x="639" y="1187.8" width="999.5" height="2.4" fill="#E1E1E1"/>
<rect x="694" y="1187.8" width="90.4" height="2.4" fill="#D3D3D3"/>
<rect x="874" y="1187.8" width="90.4" height="2.4" fill="#D3D3D3"/>
<rect x="1054" y="1187.8" width="90.4" height="2.4" fill="#D3D3D3"/>
<rect x="1234" y="1187.8" width="90.4" height="2.4" fill="#D3D3D3"/>
<rect x="1414" y="1187.8" width="90.4" height="2.4" fill="#D3D3D3"/>
<rect x="1594" y="1187.8" width="44.5" height="2.4" fill="#D3D3D3"/>
<rect x="639" y="1278.0" width="999.5" height="2.4" fill="#E1E1E1"/>
<rect x="694" y="1278.0" width="90.4" height="2.4" fill="#D3D3D3"/>
<rect x="874" y="1278.0" width="90.4" height="2.4" fill="#D3D3D3"/>
<rect x="1054" y="1278.0" width="90.4" height="2.4" fill="#D3D3D3"/>
<rect x="1234" y="1278.0" width="90.4" height="2.4" fill="#D3D3D3"/>
<rect x="1414" y="1278.0" width="90.4" height="2.4" fill="#D3D3D3"/>
<rect x="1594" y="1278.0" width="44.5" height="2.4" fill="#D3D3D3"/>
<rect x="639" y="1368.2" width="999.5" height="2.4" fill="#E1E1E1"/>
<rect x="694" y="1368.2" width="90.4" height="2.4" fill="#D3D3D3"/>
<rect x="874" y="1368.2" width="90.4" height="2.4" fill="#D3D3D3"/>
<rect x="1054" y="1368.2" width="90.4" height="2.4" fill="#D3D3D3"/>
<rect x="1234" y="1368.2" width="90.4" height="2.4" fill="#D3D3D3"/>
<rect x="1414" y="1368.2" width="90.4" height="2.4" fill="#D3D3D3"/>
<rect x="1594" y="1368.2" width="44.5" height="2.4" fill="#D3D3D3"/>
<rect x="692.8" y="541.5" width="2.2" height="857.5" fill="#DADADA"/>
<rect x="782.9" y="541.5" width="2.2" height="857.5" fill="#DADADA"/>
<rect x="873.1" y="541.5" width="2.2" height="857.5" fill="#DADADA"/>
<rect x="963.2" y="541.5" width="2.2" height="857.5" fill="#DADADA"/>
<rect x="1053.4" y="541.5" width="2.2" height="857.5" fill="#DADADA"/>
<rect x="1143.5" y="541.5" width="2.2" height="857.5" fill="#DADADA"/>
<rect x="1233.6" y="541.5" width="2.2" height="857.5" fill="#DADADA"/>
<rect x="1323.8" y="541.5" width="2.2" height="857.5" fill="#DADADA"/>
<rect x="1413.9" y="541.5" width="2.2" height="857.5" fill="#DADADA"/>
<rect x="1504.1" y="541.5" width="2.2" height="857.5" fill="#DADADA"/>
<rect x="1594.2" y="541.5" width="2.2" height="857.5" fill="#DADADA"/>
<rect x="644.5" y="579.4" width="4" height="1.6" fill="#ECECEC"/>
<rect x="644.5" y="601.9" width="4" height="1.6" fill="#ECECEC"/>
<rect x="644.5" y="624.5" width="4" height="1.6" fill="#ECECEC"/>
<rect x="644.5" y="669.6" width="4" height="1.6" fill="#ECECEC"/>
<rect x="644.5" y="692.1" width="4" height="1.6" fill="#ECECEC"/>
<rect x="644.5" y="714.7" width="4" height="1.6" fill="#ECECEC"/>
<rect x="644.5" y="759.8" width="4" height="1.6" fill="#ECECEC"/>
<rect x="644.5" y="782.3" width="4" height="1.6" fill="#ECECEC"/>
<rect x="644.5" y="804.9" width="4" height="1.6" fill="#ECECEC"/>
<rect x="644.5" y="850.0" width="4" height="1.6" fill="#ECECEC"/>
<rect x="644.5" y="872.5" width="4" height="1.6" fill="#ECECEC"/>
<rect x="644.5" y="895.1" width="4" height="1.6" fill="#ECECEC"/>
<rect x="644.5" y="940.2" width="4" height="1.6" fill="#ECECEC"/>
<rect x="644.5" y="962.7" width="4" height="1.6" fill="#ECECEC"/>
<rect x="644.5" y="985.2" width="4" height="1.6" fill="#ECECEC"/>
<rect x="644.5" y="1030.4" width="4" height="1.6" fill="#ECECEC"/>
<rect x="644.5" y="1052.9" width="4" height="1.6" fill="#ECECEC"/>
<rect x="644.5" y="1075.5" width="4" height="1.6" fill="#ECECEC"/>
<rect x="644.5" y="1120.5" width="4" height="1.6" fill="#ECECEC"/>
<rect x="644.5" y="1143.1" width="4" height="1.6" fill="#ECECEC"/>
<rect x="644.5" y="1165.7" width="4" height="1.6" fill="#ECECEC"/>
<rect x="644.5" y="1210.8" width="4" height="1.6" fill="#ECECEC"/>
<rect x="644.5" y="1233.3" width="4" height="1.6" fill="#ECECEC"/>
<rect x="644.5" y="1255.9" width="4" height="1.6" fill="#ECECEC"/>
<rect x="644.5" y="1301.0" width="4" height="1.6" fill="#ECECEC"/>
<rect x="644.5" y="1323.5" width="4" height="1.6" fill="#ECECEC"/>
<rect x="644.5" y="1346.0" width="4" height="1.6" fill="#ECECEC"/>
<rect x="644.5" y="1391.2" width="4" height="1.6" fill="#ECECEC"/>
<rect x="649" y="541.5" width="989.5" height="857.5" fill="none" stroke="#000" stroke-opacity="0.1" stroke-width="2.2"/>
<text x="630" y="564.0" font-size="18.5" text-anchor="end" fill="#5F5F66">2000</text>
<text x="630" y="654.2" font-size="18.5" text-anchor="end" fill="#5F5F66">1800</text>
<text x="630" y="744.4" font-size="18.5" text-anchor="end" fill="#5F5F66">1600</text>
<text x="630" y="834.6" font-size="18.5" text-anchor="end" fill="#5F5F66">1400</text>
<text x="630" y="924.8" font-size="18.5" text-anchor="end" fill="#5F5F66">1200</text>
<text x="630" y="1015.0" font-size="18.5" text-anchor="end" fill="#5F5F66">1000</text>
<text x="630" y="1105.2" font-size="18.5" text-anchor="end" fill="#5F5F66">800</text>
<text x="630" y="1195.4" font-size="18.5" text-anchor="end" fill="#5F5F66">600</text>
<text x="630" y="1285.6" font-size="18.5" text-anchor="end" fill="#5F5F66">400</text>
<text x="630" y="1375.8" font-size="18.5" text-anchor="end" fill="#5F5F66">200</text>
<text x="692.2" y="1428" font-size="18.5" text-anchor="middle" fill="#5F5F66">1950</text>
<text x="782.3" y="1428" font-size="18.5" text-anchor="middle" fill="#5F5F66">1960</text>
<text x="872.5" y="1428" font-size="18.5" text-anchor="middle" fill="#5F5F66">1970</text>
<text x="962.6" y="1428" font-size="18.5" text-anchor="middle" fill="#5F5F66">1980</text>
<text x="1052.8" y="1428" font-size="18.5" text-anchor="middle" fill="#5F5F66">1990</text>
<text x="1142.9" y="1428" font-size="18.5" text-anchor="middle" fill="#5F5F66">2000</text>
<text x="1233.0" y="1428" font-size="18.5" text-anchor="middle" fill="#5F5F66">2010</text>
<text x="1323.2" y="1428" font-size="18.5" text-anchor="middle" fill="#5F5F66">2020</text>
<text x="1413.3" y="1428" font-size="18.5" text-anchor="middle" fill="#5F5F66">2030</text>
<text x="1503.5" y="1428" font-size="18.5" text-anchor="middle" fill="#5F5F66">2040</text>
<text x="1593.6" y="1428" font-size="18.5" text-anchor="middle" fill="#5F5F66">2050</text>
<text transform="translate(568.2 980) rotate(-90)" font-size="24" text-anchor="middle" fill="#858585" textLength="385" lengthAdjust="spacingAndGlyphs">Population mid-year, in millions</text>
<text x="1638" y="1491" font-size="22" text-anchor="end" fill="#A0A0A0">From www.geohive.com</text>
<text x="696.0" y="1179.2" font-size="18.3" text-anchor="middle" fill="#8CC3D5">546</text>
<text x="784.6" y="1151.6" font-size="18.3" text-anchor="middle" fill="#8CC3D5">605</text>
<text x="875.5" y="1129.5" font-size="18.3" text-anchor="middle" fill="#8CC3D5">656</text>
<text x="965.6" y="1112.5" font-size="18.3" text-anchor="middle" fill="#8CC3D5">694</text>
<text x="1053.5" y="1073.5" font-size="18.3" text-anchor="middle" fill="#8CC3D5">721</text>
<text x="1146.0" y="1095.8" font-size="18.3" text-anchor="middle" fill="#8CC3D5">730</text>
<text x="1237.0" y="1097.7" font-size="18.3" text-anchor="middle" fill="#8CC3D5">728</text>
<text x="1325.5" y="1100.8" font-size="18.3" text-anchor="middle" fill="#8CC3D5">721</text>
<text x="1416.2" y="1107.5" font-size="18.3" text-anchor="middle" fill="#8CC3D5">704</text>
<text x="1506.7" y="1117.7" font-size="18.3" text-anchor="middle" fill="#8CC3D5">680</text>
<text x="1596.2" y="1132.0" font-size="18.3" text-anchor="middle" fill="#8CC3D5">650</text>
<text x="695.2" y="1275.9" font-size="18.3" text-anchor="middle" fill="#EB8D9C">332</text>
<text x="785.3" y="1237.5" font-size="18.3" text-anchor="middle" fill="#EB8D9C">417</text>
<text x="875.5" y="1193.3" font-size="18.3" text-anchor="middle" fill="#EB8D9C">513</text>
<text x="965.0" y="1148.5" font-size="18.3" text-anchor="middle" fill="#EB8D9C">614</text>
<text x="1054.0" y="1100.3" font-size="18.3" text-anchor="middle" fill="#EB8D9C">721</text>
<text x="1143.8" y="1039.3" font-size="18.3" text-anchor="middle" fill="#EB8D9C">836</text>
<text x="1197.0" y="1010.0" font-size="18.3" text-anchor="middle" fill="#EB8D9C">935</text>
<text x="1325.2" y="962.0" font-size="18.3" text-anchor="middle" fill="#EB8D9C">1027</text>
<text x="1415.6" y="924.0" font-size="18.3" text-anchor="middle" fill="#EB8D9C">1110</text>
<text x="1506.3" y="894.2" font-size="18.3" text-anchor="middle" fill="#EB8D9C">1178</text>
<text x="1595.2" y="870.4" font-size="18.3" text-anchor="middle" fill="#EB8D9C">1231</text>
<text x="695.2" y="1323.3" font-size="18.3" text-anchor="middle" fill="#90C890">227</text>
<text x="785.3" y="1298.0" font-size="18.3" text-anchor="middle" fill="#90C890">283</text>
<text x="875.5" y="1262.8" font-size="18.3" text-anchor="middle" fill="#90C890">361</text>
<text x="965.6" y="1211.5" font-size="18.3" text-anchor="middle" fill="#90C890">471</text>
<text x="1056.0" y="1143.3" font-size="18.3" text-anchor="middle" fill="#90C890">623</text>
<text x="1146.0" y="1066.0" font-size="18.3" text-anchor="middle" fill="#90C890">797</text>
<text x="1236.2" y="983.0" font-size="18.3" text-anchor="middle" fill="#90C890">982</text>
<text x="1325.5" y="888.3" font-size="18.3" text-anchor="middle" fill="#90C890">1189</text>
<text x="1415.4" y="787.7" font-size="18.3" text-anchor="middle" fill="#90C890">1416</text>
<text x="1506.5" y="674.8" font-size="18.3" text-anchor="middle" fill="#90C890">1665</text>
<text x="1594.1" y="561.6" font-size="18.3" text-anchor="middle" fill="#90C890">1937</text>
<polyline points="692.2,1211.8 782.3,1185.1 872.5,1162.1 962.6,1145.0 1052.8,1132.8 1142.9,1128.7 1233.0,1129.6 1323.2,1132.8 1413.3,1140.4 1503.5,1151.3 1593.6,1164.8" fill="none" stroke="#5BB0CD" stroke-width="3.1" stroke-linejoin="round"/>
<circle cx="692.2" cy="1211.8" r="6.3" fill="#5BB0CD"/>
<circle cx="782.3" cy="1185.1" r="6.3" fill="#5BB0CD"/>
<circle cx="872.5" cy="1162.1" r="6.3" fill="#5BB0CD"/>
<circle cx="962.6" cy="1145.0" r="6.3" fill="#5BB0CD"/>
<circle cx="1052.8" cy="1132.8" r="6.3" fill="#5BB0CD"/>
<circle cx="1142.9" cy="1128.7" r="6.3" fill="#5BB0CD"/>
<circle cx="1233.0" cy="1129.6" r="6.3" fill="#5BB0CD"/>
<circle cx="1323.2" cy="1132.8" r="6.3" fill="#5BB0CD"/>
<circle cx="1413.3" cy="1140.4" r="6.3" fill="#5BB0CD"/>
<circle cx="1503.5" cy="1151.3" r="6.3" fill="#5BB0CD"/>
<circle cx="1593.6" cy="1164.8" r="6.3" fill="#5BB0CD"/>
<polyline points="692.2,1308.4 782.3,1270.0 872.5,1226.7 962.6,1181.1 1052.8,1132.8 1142.9,1080.8 1233.0,1036.1 1323.2,994.6 1413.3,957.1 1503.5,926.4 1593.6,902.5" fill="none" stroke="#E8687D" stroke-width="3.1" stroke-linejoin="round"/>
<circle cx="692.2" cy="1308.4" r="6.3" fill="#E8687D"/>
<circle cx="782.3" cy="1270.0" r="6.3" fill="#E8687D"/>
<circle cx="872.5" cy="1226.7" r="6.3" fill="#E8687D"/>
<circle cx="962.6" cy="1181.1" r="6.3" fill="#E8687D"/>
<circle cx="1052.8" cy="1132.8" r="6.3" fill="#E8687D"/>
<circle cx="1142.9" cy="1080.8" r="6.3" fill="#E8687D"/>
<circle cx="1233.0" cy="1036.1" r="6.3" fill="#E8687D"/>
<circle cx="1323.2" cy="994.6" r="6.3" fill="#E8687D"/>
<circle cx="1413.3" cy="957.1" r="6.3" fill="#E8687D"/>
<circle cx="1503.5" cy="926.4" r="6.3" fill="#E8687D"/>
<circle cx="1593.6" cy="902.5" r="6.3" fill="#E8687D"/>
<polyline points="692.2,1355.8 782.3,1330.5 872.5,1295.3 962.6,1245.6 1052.8,1177.0 1142.9,1098.5 1233.0,1014.9 1323.2,921.5 1413.3,819.0 1503.5,706.6 1593.6,583.7" fill="none" stroke="#6AB46A" stroke-width="3.1" stroke-linejoin="round"/>
<circle cx="692.2" cy="1355.8" r="6.3" fill="#6AB46A"/>
<circle cx="782.3" cy="1330.5" r="6.3" fill="#6AB46A"/>
<circle cx="872.5" cy="1295.3" r="6.3" fill="#6AB46A"/>
<circle cx="962.6" cy="1245.6" r="6.3" fill="#6AB46A"/>
<circle cx="1052.8" cy="1177.0" r="6.3" fill="#6AB46A"/>
<circle cx="1142.9" cy="1098.5" r="6.3" fill="#6AB46A"/>
<circle cx="1233.0" cy="1014.9" r="6.3" fill="#6AB46A"/>
<circle cx="1323.2" cy="921.5" r="6.3" fill="#6AB46A"/>
<circle cx="1413.3" cy="819.0" r="6.3" fill="#6AB46A"/>
<circle cx="1503.5" cy="706.6" r="6.3" fill="#6AB46A"/>
<circle cx="1593.6" cy="583.7" r="6.3" fill="#6AB46A"/>
<rect x="665.3" y="557.6" width="185.2" height="126.3" fill="#fff" stroke="#E0E0E0" stroke-width="2"/>
<rect x="679.8" y="570.7" width="30" height="30.6" fill="#fff" stroke="#5BB0CD" stroke-opacity="0.5" stroke-width="2"/>
<path d="M685.2 586.3 L692 593.7 L704.2 579.9" fill="none" stroke="#5BB0CD" stroke-width="2.8"/>
<path d="M719.6 585.9 H752" stroke="#5BB0CD" stroke-width="2.6"/>
<circle cx="735.6" cy="585.9" r="7.4" fill="#5BB0CD"/>
<text x="762.7" y="595.3" font-size="18.5" fill="#5F5F66">Europe</text>
<rect x="679.8" y="604.9" width="30" height="30.6" fill="#fff" stroke="#E8687D" stroke-opacity="0.5" stroke-width="2"/>
<path d="M685.2 620.5 L692 627.9 L704.2 614.1" fill="none" stroke="#E8687D" stroke-width="2.8"/>
<path d="M719.6 620.1 H752" stroke="#E8687D" stroke-width="2.6"/>
<circle cx="735.6" cy="620.1" r="7.4" fill="#E8687D"/>
<text x="760" y="629.5" font-size="18.5" fill="#5F5F66">Americas</text>
<rect x="679.8" y="639.1" width="30" height="30.6" fill="#fff" stroke="#6AB46A" stroke-opacity="0.5" stroke-width="2"/>
<path d="M685.2 654.7 L692 662.1 L704.2 648.3" fill="none" stroke="#6AB46A" stroke-width="2.8"/>
<path d="M719.6 654.3 H752" stroke="#6AB46A" stroke-width="2.6"/>
<circle cx="735.6" cy="654.3" r="7.4" fill="#6AB46A"/>
<text x="760.8" y="663.7" font-size="18.5" fill="#5F5F66">Africa</text>
</g>
</svg>
</div></div>
<div id="bodyline"></div><div id="status"></div>
<div id="bl"></div><div id="br"></div><div id="bb"></div>
</div></body></html>
